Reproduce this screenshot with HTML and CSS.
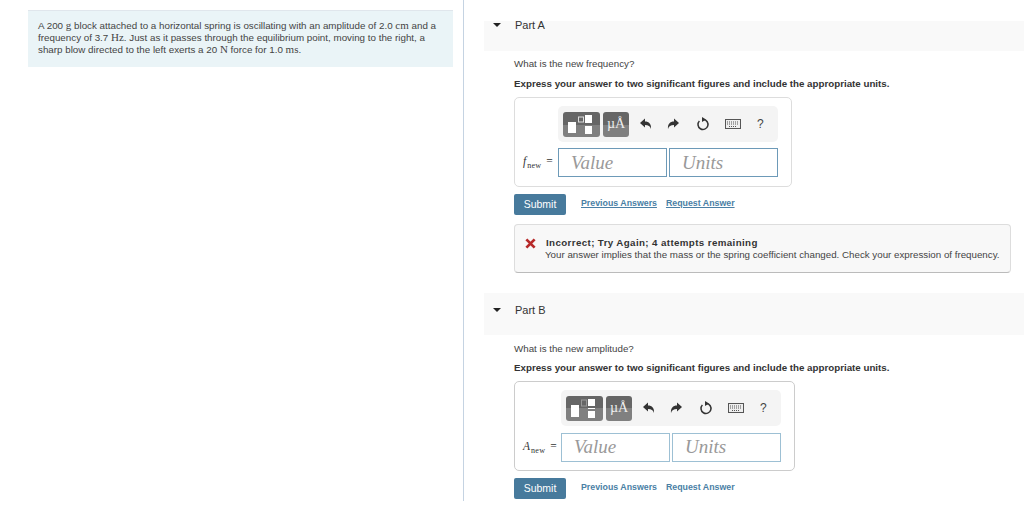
FILE: index.html
```html
<!DOCTYPE html>
<html lang="en">

<head>
    <meta charset="UTF-8" />
    <title>Part A and Part B</title>
    <link rel="stylesheet" href="styles.css">
</head>

<body>
    <div class="page">
        <div class="left-col">
            <div class="intro">
                A 200 <span class="math">g</span> block attached to a horizontal spring is oscillating with an amplitude of 2.0 <span class="math">cm</span> and a<br>
                frequency of 3.7 <span class="math">Hz</span>. Just as it passes through the equilibrium point, moving to the right, a<br>
                sharp blow directed to the left exerts a 20 <span class="math">N</span> force for 1.0 <span class="math">ms</span>.
            </div>
        </div>

        <div class="right-col">
            <div class="part-head part-a">
                <span class="arrow"></span>
                <span class="part-title">Part A</span>
            </div>
            <div class="part-body">
                <p class="question">What is the new frequency?</p>
                <p class="express">Express your answer to two significant figures and include the appropriate units.</p>

                <div class="answer-box">
                    <div class="toolbar">
                        <span class="tool-btn tool-wide">
                            <svg width="37" height="25" viewBox="0 0 37 25">
                                <rect x="5" y="10" width="8" height="11" fill="#fff" />
                                <rect x="15.500" y="5" width="5" height="5" fill="none" stroke="#ddd" />
                                <rect x="22" y="3" width="7" height="8" fill="#fff" />
                                <rect x="22" y="14" width="7" height="8" fill="#fff" />
                            </svg>
                        </span>
                        <span class="tool-btn tool-unit">µÅ</span>
                        <svg class="tool-icon" width="14" height="14" viewBox="0 0 14 14"><path d="M1 6 L6 1.500 V4.500 C10 4.500 12.500 7 12 12 C11 9 9.500 8 6 8 V10.500 Z" fill="#333" /></svg>
                        <svg class="tool-icon" width="14" height="14" viewBox="0 0 14 14"><path d="M13 6 L8 1.500 V4.500 C4 4.500 1.500 7 2 12 C3 9 4.500 8 8 8 V10.500 Z" fill="#333" /></svg>
                        <svg class="tool-icon" width="14" height="14" viewBox="0 0 14 14"><path d="M7.500 2.500 A5 5 0 1 1 3.400 4" fill="none" stroke="#333" stroke-width="1.500" /><path d="M6 0 L10 2.500 L6 5 Z" fill="#333" /></svg>
                        <svg class="tool-icon" width="16" height="10" viewBox="0 0 16 10"><rect x="0.500" y="0.500" width="15" height="9" fill="#eee" stroke="#555" /><path d="M2 3 H14 M2 5 H14 M4 7.500 H12" stroke="#555" stroke-dasharray="1 1" /></svg>
                        <span class="tool-help">?</span>
                    </div>
                    <div class="answer-row">
                        <span class="answer-label"><i>f</i><sub>new</sub> =</span>
                        <div class="field">Value</div>
                        <div class="field">Units</div>
                    </div>
                </div>

                <div class="actions">
                    <button class="btn">Submit</button>
                    <a href="#" class="link underline">Previous Answers</a>
                    <a href="#" class="link underline">Request Answer</a>
                </div>

                <div class="feedback">
                    <svg class="cross" width="11" height="11" viewBox="0 0 12 12"><path d="M1.500 1.500 L10.500 10.500 M10.500 1.500 L1.500 10.500" stroke="#b72a2a" stroke-width="3" /></svg>
                    <div class="feedback-text">
                        <div class="feedback-title">Incorrect; Try Again; 4 attempts remaining</div>
                        <div class="feedback-msg">Your answer implies that the mass or the spring coefficient changed. Check your expression of frequency.</div>
                    </div>
                </div>
            </div>

            <div class="part-head part-b">
                <span class="arrow"></span>
                <span class="part-title">Part B</span>
            </div>
            <div class="part-body">
                <p class="question">What is the new amplitude?</p>
                <p class="express">Express your answer to two significant figures and include the appropriate units.</p>

                <div class="answer-box answer-box-b">
                    <div class="toolbar">
                        <span class="tool-btn tool-wide">
                            <svg width="37" height="25" viewBox="0 0 37 25">
                                <rect x="5" y="9" width="8" height="12" fill="#fff" />
                                <rect x="15.500" y="4" width="5" height="6" fill="none" stroke="#999" />
                                <rect x="22" y="3" width="7" height="7" fill="#fff" />
                                <rect x="22" y="12" width="7" height="1" fill="#fff" />
                                <rect x="22" y="15" width="7" height="7" fill="#fff" />
                            </svg>
                        </span>
                        <span class="tool-btn tool-unit">µÅ</span>
                        <svg class="tool-icon" width="14" height="14" viewBox="0 0 14 14"><path d="M1 6 L6 1.500 V4.500 C10 4.500 12.500 7 12 12 C11 9 9.500 8 6 8 V10.500 Z" fill="#333" /></svg>
                        <svg class="tool-icon" width="14" height="14" viewBox="0 0 14 14"><path d="M13 6 L8 1.500 V4.500 C4 4.500 1.500 7 2 12 C3 9 4.500 8 8 8 V10.500 Z" fill="#333" /></svg>
                        <svg class="tool-icon" width="14" height="14" viewBox="0 0 14 14"><path d="M7.500 2.500 A5 5 0 1 1 3.400 4" fill="none" stroke="#333" stroke-width="1.500" /><path d="M6 0 L10 2.500 L6 5 Z" fill="#333" /></svg>
                        <svg class="tool-icon" width="16" height="10" viewBox="0 0 16 10"><rect x="0.500" y="0.500" width="15" height="9" fill="#eee" stroke="#555" /><path d="M2 3 H14 M2 5 H14 M4 7.500 H12" stroke="#555" stroke-dasharray="1 1" /></svg>
                        <span class="tool-help">?</span>
                    </div>
                    <div class="answer-row">
                        <span class="answer-label"><i>A</i><sub>new</sub> =</span>
                        <div class="field field-light">Value</div>
                        <div class="field field-light">Units</div>
                    </div>
                </div>

                <div class="actions">
                    <button class="btn">Submit</button>
                    <a href="#" class="link">Previous Answers</a>
                    <a href="#" class="link">Request Answer</a>
                </div>
            </div>
        </div>
    </div>
</body>

</html>
```

FILE: styles.css
```css
* {
    margin: 0;
    padding: 0;
    box-sizing: border-box;
}

html,
body {
    height: 100%;
    background: white;
    overflow: hidden;
    font-family: "Liberation Sans", Arial, sans-serif;
    color: #333;
}

.page {
    display: flex;
    height: 501px;
}

.left-col {
    width: 464px;
    padding: 10px 10px 0 28px;
    border-right: 1px solid #c5d3e2;
}

.intro {
    height: 57px;
    background: #eaf4f7;
    border-top: 1px solid #e0e6ec;
    padding: 9px 10px;
    font-size: 9.8px;
    line-height: 12px;
    color: #444;
}

.math {
    font-family: "Liberation Serif", serif;
    font-size: 11px;
    line-height: 1;
}

.right-col {
    flex: 1;
    padding: 21px 0 0 20px;
}

.part-head {
    background: #f9f9f9;
    display: flex;
    align-items: flex-start;
    font-size: 11px;
    color: #333;
}

.part-a {
    height: 30px;
}

.part-b {
    height: 42px;
    margin-top: 20px;
    padding-top: 11px;
}

.arrow {
    width: 0;
    height: 0;
    margin: 2px 0 0 9px;
    border-left: 4px solid transparent;
    border-right: 4px solid transparent;
    border-top: 4px solid #222;
}

.part-b .arrow {
    margin-top: 4px;
}

.part-title {
    margin-left: 14px;
    margin-top: -2px;
    line-height: 12px;
}

.part-b .part-title {
    margin-top: 0;
}

.part-body {
    padding-left: 30px;
}

.question {
    font-size: 9.75px;
    line-height: 12px;
    margin-top: 7px;
    color: #444;
}

.part-b+.part-body .question {
    margin-top: 8px;
}

.express {
    font-size: 9.75px;
    line-height: 12px;
    font-weight: bold;
    margin-top: 8px;
}

.part-b+.part-body .express {
    margin-top: 7px;
}

.answer-box {
    width: 278px;
    height: 90px;
    margin-top: 7px;
    padding: 8px 12px 0 43px;
    border: 1px solid #ddd;
    border-radius: 5px;
}

.answer-box-b {
    width: 281px;
    border-color: #ccc;
    padding-left: 46px;
}

.answer-box-b .answer-row {
    margin-top: 7px;
}

.toolbar {
    display: flex;
    align-items: center;
    width: 220px;
    height: 36px;
    padding-left: 5px;
    background: #f4f4f4;
    border-radius: 5px;
}

.tool-btn {
    display: flex;
    align-items: center;
    justify-content: center;
    height: 25px;
    border-radius: 3px;
    background: linear-gradient(#666 0, #666 50%, #808080 50%, #808080 100%);
    color: #eee;
}

.tool-wide {
    width: 37px;
}

.tool-unit {
    width: 26px;
    margin-left: 3px;
    font-family: "Liberation Serif", serif;
    font-size: 14px;
}

.tool-icon {
    flex: none;
    margin-left: 10px;
}

.tool-icon:nth-of-type(2) {
    margin-left: 13px;
}

.tool-icon:nth-of-type(3) {
    margin-left: 16px;
}

.tool-icon:nth-of-type(4) {
    margin-left: 15px;
}

.tool-icon:nth-of-type(5) {
    margin-left: 15px;
}

.tool-help {
    margin-left: 16px;
    font-size: 12px;
    color: #444;
}

.answer-row {
    display: flex;
    align-items: center;
    margin-top: 6px;
    position: relative;
}

.answer-label {
    position: absolute;
    left: -35px;
    font-family: "Liberation Serif", serif;
    font-size: 11.5px;
    color: #333;
    white-space: nowrap;
    word-spacing: 2px;
}

.answer-box-b .answer-label {
    left: -38px;
}

.answer-label sub {
    font-size: 8px;
    margin-left: 1px;
    letter-spacing: 0.3px;
    line-height: 1;
}

.field {
    width: 109px;
    height: 29px;
    border: 1px solid #6d9ab8;
    font-family: "Liberation Serif", serif;
    font-style: italic;
    font-size: 19px;
    line-height: 27px;
    padding-left: 12px;
    color: #999;
}

.field+.field {
    margin-left: 2px;
}

.field-light {
    border-color: #9dc0d4;
    line-height: 25px;
}

.actions {
    display: flex;
    align-items: center;
    margin-top: 7px;
}

.btn {
    width: 52px;
    height: 21px;
    padding-bottom: 2px;
    border: none;
    border-radius: 2px;
    background: #477a9c;
    color: white;
    font-family: "Liberation Sans", Arial, sans-serif;
    font-size: 10.5px;
    margin-right: 15px;
}

.link {
    font-size: 8.8px;
    font-weight: bold;
    color: #4a7fa5;
    text-decoration: none;
    margin-right: 9px;
    margin-bottom: 3px;
}

.underline {
    text-decoration: underline;
}

.feedback {
    display: flex;
    width: 497px;
    height: 49px;
    margin-top: 9px;
    padding: 12px 0 0 10px;
    background: #f8f8f8;
    border: 1px solid #ddd;
    border-bottom: 1px solid #bbb;
    border-radius: 4px;
}

.cross {
    flex: none;
    margin-top: 1px;
}

.feedback-text {
    margin-left: 10px;
}

.feedback-title {
    font-size: 9.75px;
    font-weight: bold;
    line-height: 12px;
    letter-spacing: 0.38px;
}

.feedback-msg {
    font-size: 9.75px;
    line-height: 12px;
    margin-left: -1px;
    color: #444;
    white-space: nowrap;
}
```
